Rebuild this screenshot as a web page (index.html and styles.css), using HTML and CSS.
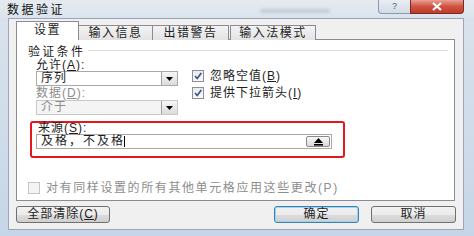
FILE: index.html
```html
<!DOCTYPE html>
<html lang="zh-CN">
<head>
  <meta charset="UTF-8" />
  <meta name="viewport" content="width=device-width, initial-scale=1.0"/>
  <title>数据验证</title>
  <link rel="stylesheet" href="styles.css">
</head>
<body>

  <div class="window">
    <div class="titlebar">
      <span class="title">数据验证</span>
      <span class="title-blur"></span>
      <div class="caption-btns">
        <span class="cap-help">?</span>
        <span class="cap-close">
          <svg width="14" height="9" viewBox="0 0 14 9"><path d="M3 1 L11 8 M11 1 L3 8" stroke="#fff" stroke-width="2.2"/></svg>
        </span>
      </div>
    </div>

    <div class="client">
      <div class="tabs">
        <div class="tab active">设置</div>
        <div class="tab">输入信息</div>
        <div class="tab">出错警告</div>
        <div class="tab">输入法模式</div>
      </div>

      <div class="panel">
        <div class="group-title"><span>验证条件</span><i class="group-line"></i></div>

        <div class="criteria">
          <div class="left-col">
            <div class="label">允许(<u>A</u>):</div>
            <div class="combo">
              <span class="combo-text">序列</span>
              <span class="drop"><svg width="7" height="4" viewBox="0 0 7 4"><path d="M0 0 H7 L3.5 4 Z" fill="#000"/></svg></span>
            </div>
            <div class="label disabled">数据(<u>D</u>):</div>
            <div class="combo disabled">
              <span class="combo-text">介于</span>
              <span class="drop"><svg width="7" height="4" viewBox="0 0 7 4"><path d="M0 0 H7 L3.5 4 Z" fill="#000"/></svg></span>
            </div>
          </div>
          <div class="right-col">
            <div class="check">
              <span class="box"><svg width="10" height="10" viewBox="0 0 10 10"><path d="M2 5 L4.2 7.5 L8.3 2" stroke="#3b4f8a" stroke-width="1.6" fill="none"/></svg></span>
              忽略空值(<u>B</u>)
            </div>
            <div class="check">
              <span class="box"><svg width="10" height="10" viewBox="0 0 10 10"><path d="M2 5 L4.2 7.5 L8.3 2" stroke="#3b4f8a" stroke-width="1.6" fill="none"/></svg></span>
              提供下拉箭头(<u>I</u>)
            </div>
          </div>
        </div>

        <div class="source-box">
          <div class="label">来源(<u>S</u>):</div>
          <div class="source-input">
            <span class="source-text">及格，不及格</span><span class="caret"></span>
            <span class="ref-btn"><svg width="11" height="8" viewBox="0 0 11 8"><path d="M5.5 0 L10 5 H1 Z" fill="#000"/><rect x="1" y="6" width="9" height="1.6" fill="#000"/></svg></span>
          </div>
        </div>

        <div class="check apply-all">
          <span class="box empty"></span>
          对有同样设置的所有其他单元格应用这些更改(P)
        </div>
      </div>

      <div class="footer">
        <button class="btn btn-clear">全部清除(<u>C</u>)</button>
        <span class="spacer"></span>
        <button class="btn btn-ok">确定</button>
        <button class="btn">取消</button>
      </div>
    </div>
  </div>

</body>
</html>
```

FILE: styles.css
```css
body {
  margin: 0;
  font-family: "Liberation Sans", "Noto Sans CJK SC", sans-serif;
  font-size: 12px;
  color: #1e1e1e;
  background: #fff;
}

u {
  text-decoration: underline;
}

.window {
  width: 474px;
  height: 236px;
  background: linear-gradient(to bottom, #e6ebf1 0, #d9e2ec 20px, #c6d6e8 100%);
  display: flex;
  flex-direction: column;
  overflow: hidden;
}

/* barra de titulo */
.titlebar {
  height: 18px;
  display: flex;
  align-items: center;
  position: relative;
}

.title {
  margin-left: 7px;
  letter-spacing: 2.5px;
  line-height: 14px;
  margin-top: 2px;
  color: #111;
}

.title-blur {
  width: 70px;
  height: 4px;
  margin-left: 195px;
  margin-top: 3px;
  background: #c3ccd6;
  border-radius: 2px;
  filter: blur(1.5px);
}

.caption-btns {
  position: absolute;
  top: 0;
  right: 10px;
  display: flex;
}

.cap-help {
  width: 31px;
  height: 13px;
  border: 1px solid #8b99ab;
  border-top: none;
  border-right: none;
  border-radius: 0 0 0 4px;
  background: linear-gradient(to bottom, #e9eef4, #d2dbe6);
  color: #55606e;
  font-size: 9px;
  line-height: 12px;
  text-align: center;
}

.cap-close {
  width: 52px;
  height: 13px;
  border: 1px solid #7a2a24;
  border-top: none;
  border-radius: 0 0 4px 0;
  background: linear-gradient(to bottom, #e8a193, #d0523f 50%, #c13a2a);
  display: flex;
  align-items: center;
  justify-content: center;
}

/* area cliente */
.client {
  margin: 0 10px 6px 8px;
  height: 212px;
  box-sizing: border-box;
  background: #f0f0f0;
  border: 1px solid #9aa6b5;
  padding: 4px 0 0 7px;
  display: flex;
  flex-direction: column;
}

.tabs {
  display: flex;
  align-items: flex-end;
  height: 17px;
  margin-bottom: -1px;
  position: relative;
  z-index: 1;
}

.tab {
  box-sizing: border-box;
  height: 15px;
  line-height: 14px;
  padding: 0;
  border: 1px solid #898c95;
  border-bottom: none;
  margin-right: -1px;
  background: linear-gradient(to bottom, #f3f3f3, #e3e3e3);
  letter-spacing: 1.5px;
  text-align: center;
  white-space: nowrap;
}

.tab:nth-child(2) { width: 75px; }
.tab:nth-child(3) { width: 77px; }
.tab:nth-child(4) { width: 86px; margin-left: 2px; }

.tab.active {
  width: 63px;
  height: 19px;
  line-height: 17px;
  background: #fff;
}

.panel {
  width: 439px;
  height: 162px;
  box-sizing: border-box;
  background: #fff;
  border: 1px solid #898c95;
  display: flex;
  flex-direction: column;
}

.group-title {
  display: flex;
  align-items: center;
  height: 12px;
  margin: 4px 6px 0 11px;
  letter-spacing: 2.3px;
}

.group-line {
  flex: 1;
  height: 0;
  border-top: 1px solid #dcdcdc;
  margin-left: 3px;
}

.criteria {
  display: flex;
  margin: 3px 0 0 19px;
  gap: 14px;
}

.left-col {
  width: 142px;
  display: flex;
  flex-direction: column;
}

.label {
  height: 12px;
  line-height: 12px;
  letter-spacing: 1px;
}

.label.disabled {
  height: 14px;
  line-height: 14px;
  color: #8d8d8d;
}

.combo {
  height: 15px;
  box-sizing: border-box;
  border: 1px solid #a9a9a9;
  display: flex;
  align-items: center;
  justify-content: space-between;
  background: #fff;
}

.combo.disabled {
  background: #f4f4f4;
  color: #8d8d8d;
  border-color: #c8c8c8;
}

.combo-text {
  padding-left: 4px;
  letter-spacing: 1px;
  line-height: 13px;
}

.drop {
  width: 16px;
  height: 13px;
  box-sizing: border-box;
  border-left: 1px solid #a0a0a0;
  background: linear-gradient(to bottom, #f6f6f6, #dcdcdc);
  display: flex;
  align-items: center;
  justify-content: center;
}

.right-col {
  display: flex;
  flex-direction: column;
  gap: 5px;
  margin-top: 11px;
}

.check {
  display: flex;
  align-items: center;
  height: 12px;
  line-height: 12px;
  letter-spacing: 1px;
}

.box {
  width: 12px;
  height: 12px;
  box-sizing: border-box;
  border: 1px solid #8e8f8f;
  background: linear-gradient(to bottom, #e8ebf0, #f8f9fa);
  margin-right: 6px;
  display: flex;
  align-items: center;
  justify-content: center;
}

.box.empty {
  border-color: #c5c5c5;
  background: #f4f4f4;
}

/* destaque vermelho */
.source-box {
  width: 315px;
  height: 37px;
  box-sizing: border-box;
  border: 2px solid #e5161c;
  border-radius: 3px;
  margin: 6px 0 0 13px;
  padding: 0 0 0 4px;
}

.source-box .label {
  height: 10px;
  line-height: 10px;
  margin: 0 0 1px 2px;
}

.source-input {
  width: 296px;
  height: 15px;
  box-sizing: border-box;
  border: 1px solid #a9a9a9;
  display: flex;
  align-items: center;
  background: #fff;
}

.source-text {
  padding-left: 4px;
  letter-spacing: 2px;
  line-height: 13px;
}

.caret {
  width: 1px;
  height: 11px;
  background: #000;
  margin-left: -1px;
}

.ref-btn {
  margin-left: auto;
  margin-right: 1px;
  width: 24px;
  height: 11px;
  box-sizing: border-box;
  border: 1px solid #8a8a8a;
  border-radius: 2px;
  background: linear-gradient(to bottom, #f8f8f8, #dadada);
  display: flex;
  align-items: center;
  justify-content: center;
}

.apply-all {
  margin: 24px 0 0 11px;
  color: #8d8d8d;
  letter-spacing: 1.6px;
}

/* botoes */
.footer {
  display: flex;
  align-items: center;
  gap: 12px;
  margin-top: 5px;
  padding-right: 7px;
}

.spacer {
  flex: 1;
}

.btn {
  height: 17px;
  width: 85px;
  padding: 0;
  font-family: inherit;
  font-size: 12px;
  letter-spacing: 1px;
  color: #1e1e1e;
  border: 1px solid #707070;
  border-radius: 3px;
  background: linear-gradient(to bottom, #f2f2f2 0, #ebebeb 50%, #dddddd 51%, #cfcfcf 100%);
  line-height: 15px;
}

.btn-clear {
  width: 94px;
}

.btn-ok {
  border-color: #3c7fb1;
  box-shadow: inset 0 0 0 1px #9cd4f1;
}
```
